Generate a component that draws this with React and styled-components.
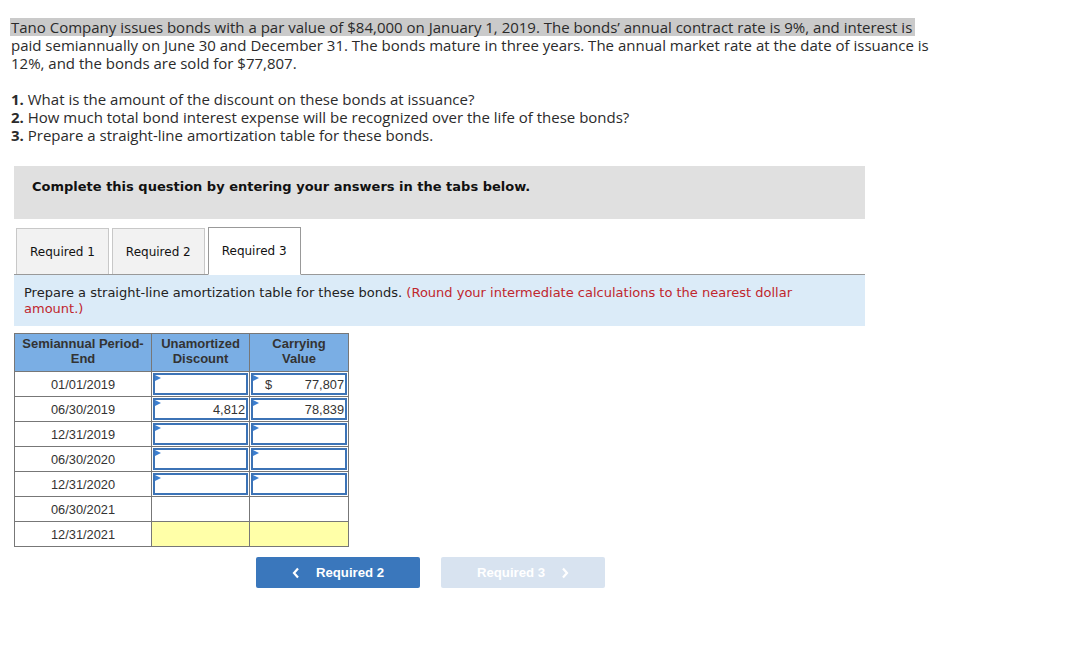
import React from 'react';
import styled, { createGlobalStyle } from 'styled-components';

const GlobalStyle = createGlobalStyle`
  body {
    margin: 0;
    background: #ffffff;
    font-family: "Open Sans", "Liberation Sans", sans-serif;
    color: #333333;
  }
`;

const Page = styled.div`
  padding: 18px 0 0 11px;
  width: 1066px;
`;

const Intro = styled.div`
  font-size: 15px;
  line-height: 18px;
  color: #2b2b2b;
`;

const Line = styled.div`
  white-space: nowrap;
  width: ${(p) => (p.$highlight ? 'fit-content' : 'auto')};
  background: ${(p) => (p.$highlight ? '#cacaca' : 'transparent')};
  margin-left: ${(p) => (p.$highlight ? '-1px' : '0')};
  padding: ${(p) => (p.$highlight ? '0 3px 0 1px' : '0')};
`;

const Questions = styled.div`
  margin-top: 18px;
  font-size: 15px;
  line-height: 18px;
  color: #2b2b2b;
`;

const Num = styled.b`
  font-weight: 700;
`;

const Panel = styled.div`
  margin: 22px 0 0 3px;
  width: 851px;
`;

const Notice = styled.div`
  background: #e0e0e0;
  height: 53px;
  box-sizing: border-box;
  padding: 13px 0 0 18px;
  font-family: "DejaVu Sans", Verdana, sans-serif;
  font-weight: 700;
  font-size: 13px;
  line-height: 16px;
  color: #111;
`;

const Tabs = styled.div`
  display: flex;
  gap: 3px;
  margin-top: 8px;
  padding-left: 2px;
  border-bottom: 1px solid #999;
  height: 47px;
  align-items: flex-end;
`;

const Tab = styled.div`
  height: ${(p) => (p.$active ? '48px' : '46px')};
  margin-bottom: ${(p) => (p.$active ? '-1px' : '0')};
  box-sizing: border-box;
  padding: 0 13px;
  display: flex;
  align-items: center;
  font-family: "DejaVu Sans", Verdana, sans-serif;
  font-size: 12px;
  color: #111;
  background: ${(p) => (p.$active ? '#ffffff' : '#f2f2f2')};
  border: 1px solid ${(p) => (p.$active ? '#999' : '#c8c8c8')};
  border-bottom: ${(p) => (p.$active ? '1px solid #ffffff' : 'none')};
`;

const Instruction = styled.div`
  background: #dbebf8;
  padding: 10px 10px 9px 10px;
  font-family: "DejaVu Sans", Verdana, sans-serif;
  font-size: 13px;
  line-height: 16px;
  color: #222;
`;

const Red = styled.span`
  color: #c0262d;
`;

const Table = styled.table`
  margin-top: 7px;
  border-collapse: collapse;
  font-family: "Liberation Sans", Arial, sans-serif;
  font-size: 12.8px;
  color: #333;
`;

const Th = styled.th`
  background: #7aaee4;
  border: 1px solid #777;
  height: 34px;
  width: ${(p) => p.$w}px;
  padding: 0 0 3px;
  font-weight: 700;
  font-size: 13px;
  line-height: 15px;
  color: #333;
`;

const Td = styled.td`
  border: 1px solid #777;
  height: 24px;
  padding: 0;
  text-align: center;
  background: ${(p) => (p.$yellow ? '#ffffa8' : '#ffffff')};
`;

const InputBox = styled.div`
  position: relative;
  margin: 1px;
  height: 18px;
  border: 2px solid #3c73b6;
  display: flex;
  align-items: center;
  justify-content: space-between;
  padding: 0 1px 0 12px;
  color: #333;

  &::before {
    content: '';
    position: absolute;
    left: 0;
    top: 0;
    border-left: 6px solid #3c7fd0;
    border-top: 3px solid transparent;
    border-bottom: 3px solid transparent;
  }
`;

const Value = styled.span`
  margin-left: auto;
`;

const Buttons = styled.div`
  display: flex;
  gap: 21px;
  margin: 10px 0 0 242px;
`;

const NavButton = styled.div`
  width: 164px;
  height: 31px;
  border-radius: 2px;
  display: flex;
  align-items: center;
  justify-content: center;
  gap: 16px;
  font-family: "Liberation Sans", Arial, sans-serif;
  font-weight: 700;
  font-size: 13.2px;
  color: #ffffff;
  background: ${(p) => (p.$disabled ? '#d8e3f0' : '#3a77bc')};
`;

const Chevron = ({ dir }) => (
  <svg width="8" height="12" viewBox="0 0 8 12">
    <path
      d={dir === 'left' ? 'M6 1.5 L2 6 L6 10.5' : 'M2 1.5 L6 6 L2 10.5'}
      fill="none"
      stroke="#ffffff"
      strokeWidth="2.2"
    />
  </svg>
);

const rows = [
  { date: '01/01/2019', input: true, disc: '', dollar: true, carry: '77,807' },
  { date: '06/30/2019', input: true, disc: '4,812', carry: '78,839' },
  { date: '12/31/2019', input: true },
  { date: '06/30/2020', input: true },
  { date: '12/31/2020', input: true },
  { date: '06/30/2021' },
  { date: '12/31/2021', yellow: true },
];

export default function App() {
  return (
    <Page>
      <GlobalStyle />
      <Intro>
        <Line $highlight>
          Tano Company issues bonds with a par value of $84,000 on January 1, 2019. The bonds’ annual contract rate is 9%, and interest is
        </Line>
        <Line>
          paid semiannually on June 30 and December 31. The bonds mature in three years. The annual market rate at the date of issuance is
        </Line>
        <Line>12%, and the bonds are sold for $77,807.</Line>
      </Intro>
      <Questions>
        <div><Num>1.</Num> What is the amount of the discount on these bonds at issuance?</div>
        <div><Num>2.</Num> How much total bond interest expense will be recognized over the life of these bonds?</div>
        <div><Num>3.</Num> Prepare a straight-line amortization table for these bonds.</div>
      </Questions>
      <Panel>
        <Notice>Complete this question by entering your answers in the tabs below.</Notice>
        <Tabs>
          <Tab>Required 1</Tab>
          <Tab>Required 2</Tab>
          <Tab $active>Required 3</Tab>
        </Tabs>
        <Instruction>
          Prepare a straight-line amortization table for these bonds.{' '}
          <Red>(Round your intermediate calculations to the nearest dollar amount.)</Red>
        </Instruction>
        <Table>
          <thead>
            <tr>
              <Th $w={136}>Semiannual Period-<br />End</Th>
              <Th $w={97}>Unamortized<br />Discount</Th>
              <Th $w={98}>Carrying<br />Value</Th>
            </tr>
          </thead>
          <tbody>
            {rows.map((r) => (
              <tr key={r.date}>
                <Td>{r.date}</Td>
                {r.input ? (
                  <>
                    <Td>
                      <InputBox><Value>{r.disc}</Value></InputBox>
                    </Td>
                    <Td>
                      <InputBox>
                        {r.dollar && <span>$</span>}
                        <Value>{r.carry}</Value>
                      </InputBox>
                    </Td>
                  </>
                ) : (
                  <>
                    <Td $yellow={r.yellow} />
                    <Td $yellow={r.yellow} />
                  </>
                )}
              </tr>
            ))}
          </tbody>
        </Table>
        <Buttons>
          <NavButton>
            <Chevron dir="left" />
            Required 2
          </NavButton>
          <NavButton $disabled>
            Required 3
            <Chevron dir="right" />
          </NavButton>
        </Buttons>
      </Panel>
    </Page>
  );
}
